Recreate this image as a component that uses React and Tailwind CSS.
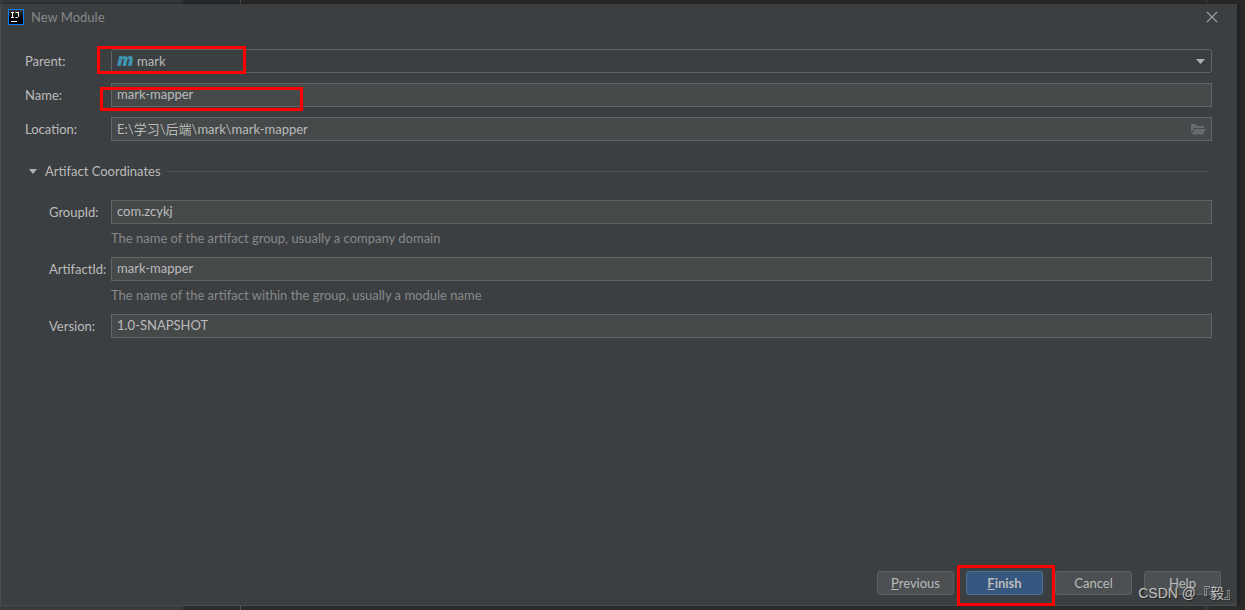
import React, { useState } from "react";

const FONT = "font-['Lato','Noto_Sans_CJK_SC',sans-serif]";

function Strip({ className }) {
  return (
    <div className={`flex shrink-0 bg-[#2b2b2b] ${className}`} aria-hidden="true">
      <div className="w-[183px] bg-[#3a3b3d]" />
      <div className="w-[57px] bg-[#2b2c2d]" />
      <div className="w-px bg-[#555555]" />
      <div className="grow" />
      <div className="w-px bg-[#4a4a4a]" />
      <div className="w-[38px]" />
    </div>
  );
}

function Mark({ className }) {
  return (
    <span
      aria-hidden="true"
      className={`pointer-events-none absolute border-3 border-[#ff0000] ${className}`}
    />
  );
}

function Row({ id, label, indent, children }) {
  return (
    <div className={`flex h-6 items-center ${indent ? "pl-6" : ""}`}>
      <label htmlFor={id} className={`shrink-0 whitespace-nowrap ${indent ? "w-[62px]" : "w-[86px]"}`}>
        {label}
      </label>
      <div className="relative h-6 min-w-0 grow">{children}</div>
    </div>
  );
}

function TextBox({ id, value }) {
  const [text, setText] = useState(value);
  return (
    <input
      id={id}
      type="text"
      value={text}
      onChange={(e) => setText(e.target.value)}
      className="block h-6 w-full border border-[#646464] bg-[#45494a] px-[5px] pb-[2px] text-[#bbbbbb] outline-none"
    />
  );
}

function Button({ primary, children }) {
  return (
    <button
      type="button"
      className={`h-6 w-[77px] rounded-[3px] border ${
        primary
          ? "border-[#4c708c] bg-[#365880] font-bold"
          : "border-[#5e6060] bg-[#4c5052]"
      }`}
    >
      {children}
    </button>
  );
}

function ProductIcon() {
  return (
    <svg width="16" height="16" viewBox="0 0 16 16" aria-hidden="true">
      <defs>
        <linearGradient id="tile" x1="0" y1="0" x2="0" y2="1">
          <stop offset="0" stopColor="#3a3a3a" />
          <stop offset="0.6" stopColor="#000000" />
        </linearGradient>
      </defs>
      <rect x="0.5" y="0.5" width="15" height="15" fill="url(#tile)" stroke="#087cfa" />
      <path d="M3 3.5h3M4.5 3v6M3 8.5h3M7.5 3.5h3.5M10.5 3v4.5L9.5 8.5H7.5" fill="none" stroke="#ffffff" />
      <path d="M3 12.5h6" stroke="#ffffff" />
    </svg>
  );
}

export default function App() {
  return (
    <div className={`relative flex min-h-screen flex-col bg-[#2b2b2b] text-[13px] leading-5 text-[#bbbbbb] ${FONT}`}>
      <Strip className="h-1" />
      <main className="mr-2 flex grow flex-col border-b border-l border-[#4b4b4c] bg-[#3c3f41] shadow-[2px_0_6px_#1c1c1c]">
        <header className="flex h-[26px] items-center justify-between pr-[19px] pl-[7px] text-[#858788]">
          <div className="flex items-center gap-[7px]">
            <ProductIcon />
            <h1>New Module</h1>
          </div>
          <button type="button" aria-label="Close">
            <svg width="12" height="12" viewBox="0 0 12 12" aria-hidden="true">
              <path d="M1 1l10 10M11 1L1 11" stroke="#a0a2a3" strokeWidth="1.1" />
            </svg>
          </button>
        </header>

        <form className="flex grow flex-col pt-[19px] pr-[25px] pl-6" onSubmit={(e) => e.preventDefault()}>
          <div className="flex flex-col gap-[10px]">
            <Row id="parent" label="Parent:">
              <select
                id="parent"
                className="block h-6 w-full appearance-none rounded-[3px] border border-[#646464] bg-[#3c3f41] pl-[25px] text-[#bbbbbb] outline-none"
              >
                <option>mark</option>
              </select>
              <span
                aria-hidden="true"
                className="pointer-events-none absolute top-0 left-[6px] font-['Open_Sans',sans-serif] text-lg leading-5 font-extrabold text-[#3e94b3] italic"
              >
                m
              </span>
              <svg className="pointer-events-none absolute top-[10px] right-[7px]" width="9" height="5" viewBox="0 0 9 5" aria-hidden="true">
                <path d="M0 0h9L4.500 5z" fill="#afb1b3" />
              </svg>
              <Mark className="-top-[3px] -left-[14px] h-7 w-[149px]" />
            </Row>
            <Row id="name" label="Name:">
              <TextBox id="name" value="mark-mapper" />
              <Mark className="top-1 -left-[11px] h-6 w-[203px]" />
            </Row>
            <Row id="location" label="Location:">
              <TextBox id="location" value={"E:\\学习\\后端\\mark\\mark-mapper"} />
              <button type="button" aria-label="Browse" className="absolute top-[6px] right-[6px]">
                <svg className="block" width="15" height="12" viewBox="0 0 15 12" aria-hidden="true">
                  <path d="M0 10V1h4.500l1.500 2H13v2H3.500z" fill="#646b6f" />
                  <path d="M4 6h11l-3 5.500H0.500z" fill="#646b6f" />
                </svg>
              </button>
            </Row>
          </div>

          <div className="mt-5 flex h-5 items-center pr-[3px] pl-1">
            <button type="button" aria-expanded="true" className="flex items-center gap-2">
              <svg width="8" height="5" viewBox="0 0 8 5" aria-hidden="true">
                <path d="M0 0h8L4 5z" fill="#afb1b3" />
              </svg>
              Artifact Coordinates
            </button>
            <div className="ml-[6px] h-px grow bg-[#515456]" />
          </div>

          <div className="mt-[19px] flex flex-col">
            <Row id="group" label="GroupId:" indent>
              <TextBox id="group" value="com.zcykj" />
            </Row>
            <p className="mt-1 mb-[9px] pl-[86px] text-[#87898a]">
              The name of the artifact group, usually a company domain
            </p>
            <Row id="artifact" label="ArtifactId:" indent>
              <TextBox id="artifact" value="mark-mapper" />
            </Row>
            <p className="mt-1 mb-[9px] pl-[86px] text-[#87898a]">
              The name of the artifact within the group, usually a module name
            </p>
            <Row id="version" label="Version:" indent>
              <TextBox id="version" value="1.0-SNAPSHOT" />
            </Row>
          </div>

          <footer className="-mr-[9px] mt-auto flex justify-end gap-3 pt-6 pb-[10px]">
            <Button>
              <u>P</u>revious
            </Button>
            <div className="relative">
              <Button primary>
                <u>F</u>inish
              </Button>
              <Mark className="-top-[6px] -left-[9px] h-[41px] w-[98px]" />
            </div>
            <Button>Cancel</Button>
            <Button>Help</Button>
          </footer>
        </form>
      </main>
      <Strip className="h-1" />
      <div className="pointer-events-none absolute right-[7px] bottom-[7px] font-['Liberation_Sans','Noto_Sans_CJK_SC',sans-serif] text-sm text-[#c4c4c4] [text-shadow:1px_1px_1px_#222222]">
        CSDN @『毅』
      </div>
    </div>
  );
}
